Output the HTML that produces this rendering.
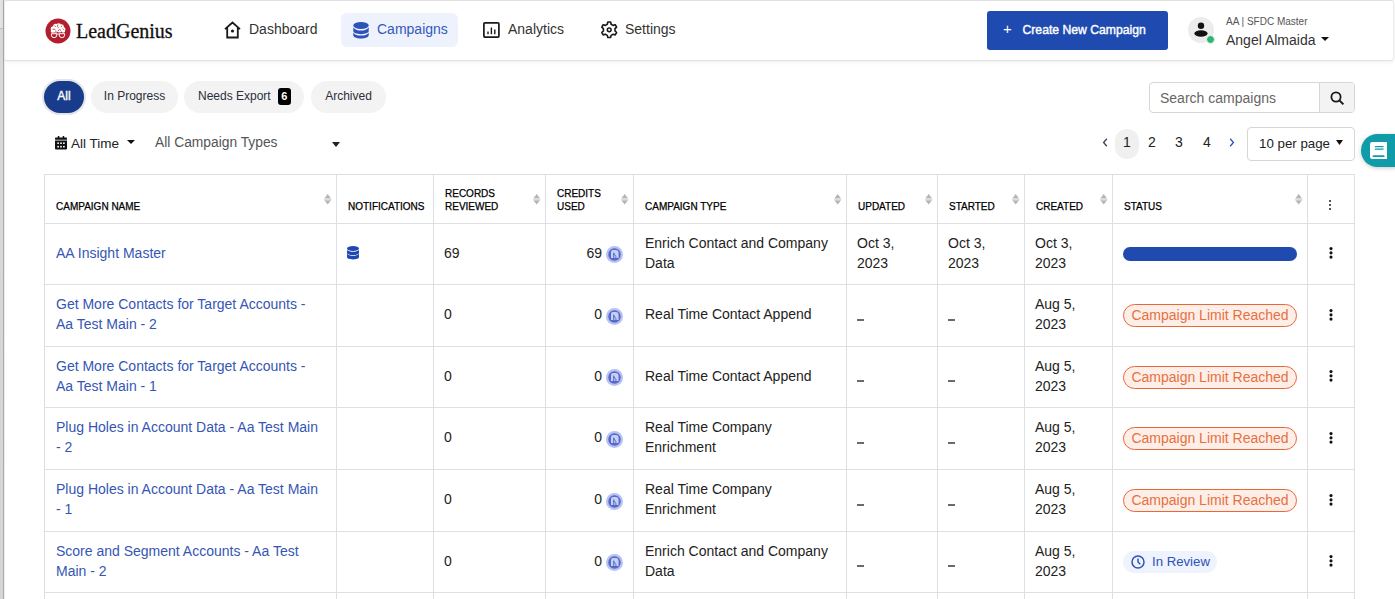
<!DOCTYPE html>
<html><head><meta charset="utf-8">
<style>
*{box-sizing:border-box;margin:0;padding:0}
html,body{width:1395px;height:599px;overflow:hidden;background:#fff;font-family:"Liberation Sans",sans-serif;color:#212529}
.a{position:absolute}
#strip{left:0;top:0;width:5px;height:599px;background:linear-gradient(to bottom,#e3e3e3 0,#e3e3e3 28px,#d9d9d9 29px,#d5d5d5 599px);border-right:1px solid #ededed;box-shadow:inset -1px 0 0 #ababab}
#strip2{left:0;top:28px;width:3px;height:1px;background:#bcc0c4}
#hdr{left:4px;top:0;width:1390px;height:61px;background:#fff;border:1px solid #ebebeb;border-top-color:#dfe0e2;border-bottom-color:#e2e2e2;border-radius:3px;box-shadow:0 1px 4px rgba(0,0,0,.07)}
.nav{font-size:14px;color:#333;white-space:nowrap}
.pill{height:32px;border-radius:16px;background:#f3f3f3;font-size:12px;color:#2b2f3a;padding-bottom:2px;display:flex;align-items:center;justify-content:center;white-space:nowrap}
.hl{height:1px;background:#dedfe2}
.vl{width:1px;background:#dedfe2}
.th{font-size:10px;font-weight:normal;-webkit-text-stroke:.25px #000;color:#000;line-height:13px}
.cell{display:flex;align-items:center;font-size:14px;line-height:20px;color:#222}
.lnk{color:#3556b4}
.badge{height:23px;border:1px solid #e8683a;background:#fdeee8;color:#e8703f;border-radius:12px;font-size:14px;display:flex;align-items:center;justify-content:center;white-space:nowrap}
.sort{width:8px;height:12px}
.keb{width:4px}
.keb i{display:block;width:3px;height:3px;border-radius:50%;background:#111;margin-bottom:1.5px}
</style></head><body>
<div class="a" id="strip"></div>
<div class="a" id="strip2"></div>
<div class="a" id="hdr"></div>

<!-- logo -->
<svg class="a" style="left:45px;top:18px" width="26" height="26" viewBox="0 0 26 26">
  <circle cx="13" cy="13" r="12.5" fill="#b11f2e"/>
  <g fill="#fff">
    <circle cx="8.2" cy="10.8" r="2.5"/><circle cx="10.6" cy="8.3" r="2.5"/><circle cx="13.6" cy="7.6" r="2.4"/><circle cx="16.4" cy="8.6" r="2.4"/>
    <circle cx="18" cy="11.3" r="2.4"/><circle cx="14.5" cy="11.6" r="2.8"/><circle cx="10.5" cy="12" r="2.6"/><circle cx="7.6" cy="12.9" r="1.9"/><circle cx="18.4" cy="13" r="1.8"/>
  </g>
  <path d="M9.5 7.5l1.3 1.6M13 6.5l-.6 2.2 1.4 1.2M16.2 7.6l.2 1.6M7.5 11.2h2.2l1 1.2M12.8 12.8l1.8-1.2 1.4.8M17.8 10.6l.8 1.2M10.5 14l.8-1" stroke="#b11f2e" stroke-width=".75" fill="none"/>
  <path d="M6.4 15.7H11.8V17.1Q11.8 19.6 9.1 19.6Q6.4 19.6 6.4 17.1zM14.2 15.7H19.6V17.1Q19.6 19.6 16.9 19.6Q14.2 19.6 14.2 17.1z" fill="none" stroke="#fff" stroke-width="1"/>
  <path d="M11.8 16h2.4" stroke="#fff" stroke-width=".8"/>
</svg>
<div class="a" style="left:76px;top:18px;font-family:'Liberation Serif',serif;font-size:20px;color:#111;line-height:26px;-webkit-text-stroke:.3px #111">LeadGenius</div>

<!-- nav -->
<svg class="a" style="left:223px;top:21px" width="19" height="18" viewBox="0 0 19 18">
  <path d="M2 8.2L9.5 1.5 17 8.2M4.2 6.5V16.5h10.6V6.5" fill="none" stroke="#1a1a1a" stroke-width="1.8" stroke-linejoin="miter"/>
  <circle cx="9.5" cy="10" r="1.6" fill="#1a1a1a"/>
</svg>
<div class="a nav" style="left:249px;top:21px;line-height:16px">Dashboard</div>

<div class="a" style="left:341px;top:13px;width:117px;height:34px;border-radius:6px;background:#edf2fc"></div>
<svg class="a" style="left:352.5px;top:21.5px" width="16" height="17" viewBox="0 0 16 17">
  <ellipse cx="8" cy="3.5" rx="7.7" ry="3.4" fill="#2d52b8"/>
  <path d="M0.3 5.2C1.5 7.6 4.5 8.6 8 8.6S14.5 7.6 15.7 5.2V9.1C15.7 10.9 12.3 12.2 8 12.2S0.3 10.9 0.3 9.1z" fill="#2d52b8"/>
  <path d="M0.3 10.4C1.5 12.6 4.5 13.6 8 13.6S14.5 12.6 15.7 10.4V13.3C15.7 15.2 12.3 16.6 8 16.6S0.3 15.2 0.3 13.3z" fill="#2d52b8"/>
</svg>
<div class="a nav" style="left:377px;top:21px;line-height:16px;color:#3458bd">Campaigns</div>

<svg class="a" style="left:483px;top:22px" width="17" height="16" viewBox="0 0 17 16">
  <rect x="0.9" y="0.9" width="15" height="14.2" rx="1" fill="none" stroke="#1a1a1a" stroke-width="1.7"/>
  <path d="M5 12.2V9.5M8.4 12.2V5.5M11.8 12.2V7.5" stroke="#1a1a1a" stroke-width="1.4"/>
</svg>
<div class="a nav" style="left:508px;top:21px;line-height:16px">Analytics</div>

<svg class="a" style="left:597px;top:18px" width="24" height="24" viewBox="0 0 24 24">
  <path d="M9.66 5.19 L10.33 2.55 L13.67 2.55 L14.34 5.19 L16.72 6.57 L19.35 5.83 L21.02 8.72 L19.07 10.63 L19.07 13.37 L21.02 15.28 L19.35 18.17 L16.72 17.43 L14.34 18.81 L13.67 21.45 L10.33 21.45 L9.66 18.81 L7.28 17.43 L4.65 18.17 L2.98 15.28 L4.93 13.37 L4.93 10.63 L2.98 8.72 L4.65 5.83 L7.28 6.57z" transform="translate(12.2 11.8) scale(.82) translate(-12 -12)" fill="none" stroke="#1a1a1a" stroke-width="2" stroke-linejoin="round"/>
  <circle cx="12.2" cy="11.8" r="1.9" fill="none" stroke="#1a1a1a" stroke-width="1.5"/>
</svg>
<div class="a nav" style="left:625px;top:21px;line-height:16px">Settings</div>

<!-- create button -->
<div class="a" style="left:987px;top:11px;width:181px;height:39px;background:#1f4bb0;border-radius:3px"></div>
<div class="a" style="left:1003px;top:21px;font-size:15px;color:#fff;line-height:16px">+</div>
<div class="a" style="left:1022.5px;top:22px;font-size:12.2px;font-weight:normal;-webkit-text-stroke:.4px #fff;color:#fff;line-height:16px">Create New Campaign</div>

<!-- user -->
<div class="a" style="left:1188px;top:17px;width:26px;height:26px;border-radius:50%;background:#ececec"></div>
<svg class="a" style="left:1193px;top:21px" width="16" height="16" viewBox="0 0 16 16">
  <circle cx="8" cy="4.8" r="3.2" fill="#111"/>
  <ellipse cx="8" cy="12.5" rx="6.6" ry="3.3" fill="#111"/>
</svg>
<div class="a" style="left:1205.5px;top:34.5px;width:9px;height:9px;border-radius:50%;background:#2bb673;border:1px solid #f4f4f4"></div>
<div class="a" style="left:1226px;top:15.5px;font-size:10px;color:#555;line-height:12px">AA | SFDC Master</div>
<div class="a" style="left:1226px;top:31.5px;font-size:14px;color:#333;line-height:16px">Angel Almaida</div>
<svg class="a" style="left:1321px;top:37px" width="8" height="4" viewBox="0 0 8 4"><path d="M0 0h8L4 4z" fill="#111"/></svg>

<!-- filter pills -->
<div class="a pill" style="left:44px;top:81px;width:40px;background:#183c8b;color:#fff;-webkit-text-stroke:.35px #fff;box-shadow:0 0 0 2px #e4e4e4">All</div>
<div class="a pill" style="left:91px;top:81px;width:87px">In Progress</div>
<div class="a pill" style="left:184px;top:81px;width:120px;justify-content:flex-start;padding-left:14px">Needs Export<span style="display:inline-block;margin-left:7px;width:13px;height:17px;background:#000;color:#fff;border-radius:3px;font-weight:bold;font-size:11px;text-align:center;line-height:17px;position:relative;top:0.5px">6</span></div>
<div class="a pill" style="left:311px;top:81px;width:75px">Archived</div>

<!-- search -->
<div class="a" style="left:1149px;top:82px;width:206px;height:31px;border:1px solid #d6d6d6;border-radius:4px"></div>
<div class="a" style="left:1319px;top:83px;width:35px;height:29px;background:#f3f3f3;border-left:1px solid #d6d6d6;border-radius:0 3px 3px 0"></div>
<div class="a" style="left:1160px;top:90px;font-size:14px;color:#666;line-height:16px">Search campaigns</div>
<svg class="a" style="left:1329.5px;top:90.5px" width="15" height="15" viewBox="0 0 15 15">
  <circle cx="6" cy="6" r="4.6" fill="none" stroke="#1a1a1a" stroke-width="1.8"/>
  <path d="M9.4 9.4l4 4" stroke="#1a1a1a" stroke-width="2"/>
</svg>

<!-- date/type filters -->
<svg class="a" style="left:55px;top:136px" width="12" height="14" viewBox="0 0 12 14">
  <rect x="2.8" y="0" width="1.5" height="2.6" fill="#111"/><rect x="7.7" y="0" width="1.5" height="2.6" fill="#111"/>
  <rect x="0" y="1.6" width="12" height="2.2" rx=".9" fill="#111"/>
  <path d="M0 4.4H12V12.4Q12 13.4 11 13.4H1Q0 13.4 0 12.4z" fill="#111"/>
  <g fill="#fff"><rect x="2.3" y="6.4" width="1.6" height="1.6"/><rect x="5.2" y="6.4" width="1.6" height="1.6"/><rect x="8.1" y="6.4" width="1.6" height="1.6"/><rect x="2.3" y="9.9" width="1.6" height="1.6"/><rect x="5.2" y="9.9" width="1.6" height="1.6"/><rect x="8.1" y="9.9" width="1.6" height="1.6"/></g>
</svg>
<div class="a" style="left:71px;top:136px;font-size:13.5px;color:#222;line-height:16px">All Time</div>
<svg class="a" style="left:127px;top:140px" width="8" height="4" viewBox="0 0 8 4"><path d="M0 0h8L4 4z" fill="#111"/></svg>
<div class="a" style="left:155px;top:135px;font-size:13.8px;color:#555;line-height:16px">All Campaign Types</div>
<svg class="a" style="left:332px;top:142px" width="8" height="5" viewBox="0 0 8 5"><path d="M0 0h8L4 5z" fill="#222"/></svg>

<!-- pagination -->
<svg class="a" style="left:1101.5px;top:138px" width="6" height="9" viewBox="0 0 6 9"><path d="M4.8 .8L1.6 4.5L4.8 8.2" fill="none" stroke="#3b3f5a" stroke-width="1.3"/></svg>
<div class="a" style="left:1115px;top:129px;width:24px;height:30px;border-radius:12px;background:#f0f0f0"></div>
<div class="a" style="left:1123px;top:135px;font-size:14px;color:#222;line-height:14px">1</div>
<div class="a" style="left:1148px;top:135px;font-size:14px;color:#222;line-height:14px">2</div>
<div class="a" style="left:1175px;top:135px;font-size:14px;color:#222;line-height:14px">3</div>
<div class="a" style="left:1203px;top:135px;font-size:14px;color:#222;line-height:14px">4</div>
<svg class="a" style="left:1229px;top:138px" width="6" height="9" viewBox="0 0 6 9"><path d="M1.2 .8L4.4 4.5L1.2 8.2" fill="none" stroke="#2d4fc0" stroke-width="1.3"/></svg>
<div class="a" style="left:1247px;top:127px;width:108px;height:34px;border:1px solid #d6d6d6;border-radius:4px"></div>
<div class="a" style="left:1259px;top:135.5px;font-size:13.3px;color:#222;line-height:16px">10 per page</div>
<svg class="a" style="left:1336px;top:140px" width="7" height="5" viewBox="0 0 7 5"><path d="M0 0h7L3.5 5z" fill="#111"/></svg>

<!-- floating -->
<div class="a" style="left:1361px;top:133.5px;width:50px;height:33.5px;border-radius:17px;background:#0f9ba7;box-shadow:0 1px 4px rgba(0,0,0,.22)"></div>
<svg class="a" style="left:1370px;top:141.5px" width="17" height="17" viewBox="0 0 17 17">
  <path d="M2.2 0H17V17H2.2Q0 17 0 14.8V2.2Q0 0 2.2 0z" fill="#fff"/>
  <path d="M4.8 4.6H13.6M4.8 7.1H13.6" stroke="#0f9ba7" stroke-width="1.1"/>
  <rect x="2.6" y="13.2" width="12" height="1.9" rx=".95" fill="#0f9ba7"/>
</svg>

<div class="a vl" style="left:44px;top:174px;height:425px"></div>
<div class="a vl" style="left:336px;top:174px;height:425px"></div>
<div class="a vl" style="left:433px;top:174px;height:425px"></div>
<div class="a vl" style="left:545px;top:174px;height:425px"></div>
<div class="a vl" style="left:633px;top:174px;height:425px"></div>
<div class="a vl" style="left:846px;top:174px;height:425px"></div>
<div class="a vl" style="left:937px;top:174px;height:425px"></div>
<div class="a vl" style="left:1024px;top:174px;height:425px"></div>
<div class="a vl" style="left:1112px;top:174px;height:425px"></div>
<div class="a vl" style="left:1307px;top:174px;height:425px"></div>
<div class="a vl" style="left:1354px;top:174px;height:425px"></div>
<div class="a hl" style="left:44px;top:174px;width:1311px"></div>
<div class="a hl" style="left:44px;top:223px;width:1311px"></div>
<div class="a hl" style="left:44px;top:284px;width:1311px"></div>
<div class="a hl" style="left:44px;top:346px;width:1311px"></div>
<div class="a hl" style="left:44px;top:407px;width:1311px"></div>
<div class="a hl" style="left:44px;top:469px;width:1311px"></div>
<div class="a hl" style="left:44px;top:531px;width:1311px"></div>
<div class="a hl" style="left:44px;top:592px;width:1311px"></div>
<div class="a th" style="left:56px;top:175px;width:280px;height:48px;display:flex;align-items:flex-end;padding-bottom:10px">CAMPAIGN NAME</div>
<div class="a" style="left:323.5px;top:193.5px;width:8px;height:11px"><svg width="8" height="11" viewBox="0 0 8 11" style="display:block"><path d="M3.7 0L7.1 4.6H0.3z M0.3 6.2H7.1L3.7 10.6z" fill="#b5b5b5"/><path d="M0.3 4.6H7.1L7.5 5.4L7.1 6.2H0.3L-.1 5.4z" fill="#dcdcdc"/></svg></div>
<div class="a th" style="left:348px;top:175px;width:85px;height:48px;display:flex;align-items:flex-end;padding-bottom:10px">NOTIFICATIONS</div>
<div class="a th" style="left:445px;top:175px;width:100px;height:48px;display:flex;align-items:flex-end;padding-bottom:10px">RECORDS<br>REVIEWED</div>
<div class="a" style="left:532.5px;top:193.5px;width:8px;height:11px"><svg width="8" height="11" viewBox="0 0 8 11" style="display:block"><path d="M3.7 0L7.1 4.6H0.3z M0.3 6.2H7.1L3.7 10.6z" fill="#b5b5b5"/><path d="M0.3 4.6H7.1L7.5 5.4L7.1 6.2H0.3L-.1 5.4z" fill="#dcdcdc"/></svg></div>
<div class="a th" style="left:557px;top:175px;width:76px;height:48px;display:flex;align-items:flex-end;padding-bottom:10px">CREDITS<br>USED</div>
<div class="a" style="left:620.5px;top:193.5px;width:8px;height:11px"><svg width="8" height="11" viewBox="0 0 8 11" style="display:block"><path d="M3.7 0L7.1 4.6H0.3z M0.3 6.2H7.1L3.7 10.6z" fill="#b5b5b5"/><path d="M0.3 4.6H7.1L7.5 5.4L7.1 6.2H0.3L-.1 5.4z" fill="#dcdcdc"/></svg></div>
<div class="a th" style="left:645px;top:175px;width:201px;height:48px;display:flex;align-items:flex-end;padding-bottom:10px">CAMPAIGN TYPE</div>
<div class="a" style="left:833.5px;top:193.5px;width:8px;height:11px"><svg width="8" height="11" viewBox="0 0 8 11" style="display:block"><path d="M3.7 0L7.1 4.6H0.3z M0.3 6.2H7.1L3.7 10.6z" fill="#b5b5b5"/><path d="M0.3 4.6H7.1L7.5 5.4L7.1 6.2H0.3L-.1 5.4z" fill="#dcdcdc"/></svg></div>
<div class="a th" style="left:858px;top:175px;width:79px;height:48px;display:flex;align-items:flex-end;padding-bottom:10px">UPDATED</div>
<div class="a" style="left:924.5px;top:193.5px;width:8px;height:11px"><svg width="8" height="11" viewBox="0 0 8 11" style="display:block"><path d="M3.7 0L7.1 4.6H0.3z M0.3 6.2H7.1L3.7 10.6z" fill="#b5b5b5"/><path d="M0.3 4.6H7.1L7.5 5.4L7.1 6.2H0.3L-.1 5.4z" fill="#dcdcdc"/></svg></div>
<div class="a th" style="left:949px;top:175px;width:75px;height:48px;display:flex;align-items:flex-end;padding-bottom:10px">STARTED</div>
<div class="a" style="left:1011.5px;top:193.5px;width:8px;height:11px"><svg width="8" height="11" viewBox="0 0 8 11" style="display:block"><path d="M3.7 0L7.1 4.6H0.3z M0.3 6.2H7.1L3.7 10.6z" fill="#b5b5b5"/><path d="M0.3 4.6H7.1L7.5 5.4L7.1 6.2H0.3L-.1 5.4z" fill="#dcdcdc"/></svg></div>
<div class="a th" style="left:1036px;top:175px;width:76px;height:48px;display:flex;align-items:flex-end;padding-bottom:10px">CREATED</div>
<div class="a" style="left:1099.5px;top:193.5px;width:8px;height:11px"><svg width="8" height="11" viewBox="0 0 8 11" style="display:block"><path d="M3.7 0L7.1 4.6H0.3z M0.3 6.2H7.1L3.7 10.6z" fill="#b5b5b5"/><path d="M0.3 4.6H7.1L7.5 5.4L7.1 6.2H0.3L-.1 5.4z" fill="#dcdcdc"/></svg></div>
<div class="a th" style="left:1124px;top:175px;width:183px;height:48px;display:flex;align-items:flex-end;padding-bottom:10px">STATUS</div>
<div class="a" style="left:1294.5px;top:193.5px;width:8px;height:11px"><svg width="8" height="11" viewBox="0 0 8 11" style="display:block"><path d="M3.7 0L7.1 4.6H0.3z M0.3 6.2H7.1L3.7 10.6z" fill="#b5b5b5"/><path d="M0.3 4.6H7.1L7.5 5.4L7.1 6.2H0.3L-.1 5.4z" fill="#dcdcdc"/></svg></div>
<div class="a" style="left:1329px;top:200px;width:2px;height:10px"><i style="position:absolute;left:0;top:0;width:2px;height:2px;background:#555"></i><i style="position:absolute;left:0;top:4px;width:2px;height:2px;background:#555"></i><i style="position:absolute;left:0;top:8px;width:2px;height:2px;background:#555"></i></div>
<div class="a cell" style="left:45px;top:224px;width:291px;height:60px;padding-left:11px;padding-right:0px;padding-bottom:2px;"><span class="lnk">AA Insight Master</span></div>
<div class="a cell" style="left:337px;top:224px;width:96px;height:60px;padding-left:10px;padding-right:0px;padding-bottom:2px;"><svg width="12" height="14" viewBox="0 0 12 14" style="display:block;position:relative;top:-0.5px"><ellipse cx="6" cy="2.5" rx="6" ry="2.4" fill="#1f48b2"/><path d="M0 3.9C1.2 5.1 3.5 5.7 6 5.7S10.8 5.1 12 3.9V7C12 8.2 9.3 9.1 6 9.1S0 8.200 0 7z" fill="#1f48b2"/><path d="M0 8C1.2 9.2 3.5 9.8 6 9.8S10.8 9.2 12 8V11.3C12 12.5 9.3 13.4 6 13.4S0 12.5 0 11.3z" fill="#1f48b2"/></svg></div>
<div class="a cell" style="left:434px;top:224px;width:111px;height:60px;padding-left:10px;padding-right:0px;padding-bottom:2px;">69</div>
<div class="a cell" style="left:546px;top:224px;width:87px;height:60px;padding-left:0px;padding-right:10px;padding-bottom:2px;justify-content:flex-end">69<svg width="17" height="17" viewBox="0 0 17 17" style="margin-left:4px;position:relative;top:1px"><circle cx="8.5" cy="8.5" r="8.5" fill="#b6c2f4"/><circle cx="8.5" cy="8.5" r="6.2" fill="#5769c6"/><path d="M5 12.1V6.2Q5 4.1 7 4.1H9.8Q12.6 4.1 12.6 7V12.1z" fill="#c6cff7"/><path d="M7.7 6.6V12.2M7.7 7.2L9.9 10.6V12.2" stroke="#5769c6" stroke-width="1" fill="none"/></svg></div>
<div class="a cell" style="left:634px;top:224px;width:212px;height:60px;padding-left:11px;padding-right:0px;padding-bottom:2px;">Enrich Contact and Company<br>Data</div>
<div class="a cell" style="left:847px;top:224px;width:90px;height:60px;padding-left:10px;padding-right:0px;padding-bottom:2px;">Oct 3,<br>2023</div>
<div class="a cell" style="left:938px;top:224px;width:86px;height:60px;padding-left:10px;padding-right:0px;padding-bottom:2px;">Oct 3,<br>2023</div>
<div class="a cell" style="left:1025px;top:224px;width:87px;height:60px;padding-left:10px;padding-right:0px;padding-bottom:2px;">Oct 3,<br>2023</div>
<div class="a cell" style="left:1113px;top:224px;width:194px;height:60px;padding-left:10px;padding-right:0px;padding-bottom:2px;"><div style="width:174px;height:14px;border-radius:7px;background:#1f4bb0;position:relative;top:1px"></div></div>
<div class="a cell" style="left:1308px;top:224px;width:46px;height:60px;padding-left:0px;padding-right:0px;padding-bottom:2px;justify-content:center"><svg width="4" height="12" viewBox="0 0 4 12" style="display:block;position:relative;top:0px"><circle cx="2" cy="1.6" r="1.55" fill="#111"/><circle cx="2" cy="5.85" r="1.55" fill="#111"/><circle cx="2" cy="10.1" r="1.55" fill="#111"/></svg></div>
<div class="a cell" style="left:45px;top:285px;width:291px;height:61px;padding-left:11px;padding-right:0px;padding-bottom:3px;"><span class="lnk">Get More Contacts for Target Accounts -<br>Aa Test Main - 2</span></div>
<div class="a cell" style="left:434px;top:285px;width:111px;height:61px;padding-left:10px;padding-right:0px;padding-bottom:3px;">0</div>
<div class="a cell" style="left:546px;top:285px;width:87px;height:61px;padding-left:0px;padding-right:10px;padding-bottom:3px;justify-content:flex-end">0<svg width="17" height="17" viewBox="0 0 17 17" style="margin-left:4px;position:relative;top:2px"><circle cx="8.5" cy="8.5" r="8.5" fill="#b6c2f4"/><circle cx="8.5" cy="8.5" r="6.2" fill="#5769c6"/><path d="M5 12.1V6.2Q5 4.1 7 4.1H9.8Q12.6 4.1 12.6 7V12.1z" fill="#c6cff7"/><path d="M7.7 6.6V12.2M7.7 7.2L9.9 10.6V12.2" stroke="#5769c6" stroke-width="1" fill="none"/></svg></div>
<div class="a cell" style="left:634px;top:285px;width:212px;height:61px;padding-left:11px;padding-right:0px;padding-bottom:3px;">Real Time Contact Append</div>
<div class="a cell" style="left:847px;top:285px;width:90px;height:61px;padding-left:10px;padding-right:0px;padding-bottom:3px;"><div style="width:7px;height:2px;background:#6a6a6a;margin-top:11px"></div></div>
<div class="a cell" style="left:938px;top:285px;width:86px;height:61px;padding-left:10px;padding-right:0px;padding-bottom:3px;"><div style="width:7px;height:2px;background:#6a6a6a;margin-top:11px"></div></div>
<div class="a cell" style="left:1025px;top:285px;width:87px;height:61px;padding-left:10px;padding-right:0px;padding-bottom:3px;">Aug 5,<br>2023</div>
<div class="a cell" style="left:1113px;top:285px;width:194px;height:61px;padding-left:10px;padding-right:0px;padding-bottom:3px;"><div class="badge" style="width:174px;height:23px;position:relative;top:1px">Campaign Limit Reached</div></div>
<div class="a cell" style="left:1308px;top:285px;width:46px;height:61px;padding-left:0px;padding-right:0px;padding-bottom:3px;justify-content:center"><svg width="4" height="12" viewBox="0 0 4 12" style="display:block;position:relative;top:1px"><circle cx="2" cy="1.6" r="1.55" fill="#111"/><circle cx="2" cy="5.85" r="1.55" fill="#111"/><circle cx="2" cy="10.1" r="1.55" fill="#111"/></svg></div>
<div class="a cell" style="left:45px;top:347px;width:291px;height:60px;padding-left:11px;padding-right:0px;padding-bottom:2px;"><span class="lnk">Get More Contacts for Target Accounts -<br>Aa Test Main - 1</span></div>
<div class="a cell" style="left:434px;top:347px;width:111px;height:60px;padding-left:10px;padding-right:0px;padding-bottom:2px;">0</div>
<div class="a cell" style="left:546px;top:347px;width:87px;height:60px;padding-left:0px;padding-right:10px;padding-bottom:2px;justify-content:flex-end">0<svg width="17" height="17" viewBox="0 0 17 17" style="margin-left:4px;position:relative;top:1px"><circle cx="8.5" cy="8.5" r="8.5" fill="#b6c2f4"/><circle cx="8.5" cy="8.5" r="6.2" fill="#5769c6"/><path d="M5 12.1V6.2Q5 4.1 7 4.1H9.8Q12.6 4.1 12.6 7V12.1z" fill="#c6cff7"/><path d="M7.7 6.6V12.2M7.7 7.2L9.9 10.6V12.2" stroke="#5769c6" stroke-width="1" fill="none"/></svg></div>
<div class="a cell" style="left:634px;top:347px;width:212px;height:60px;padding-left:11px;padding-right:0px;padding-bottom:2px;">Real Time Contact Append</div>
<div class="a cell" style="left:847px;top:347px;width:90px;height:60px;padding-left:10px;padding-right:0px;padding-bottom:2px;"><div style="width:7px;height:2px;background:#6a6a6a;margin-top:9px"></div></div>
<div class="a cell" style="left:938px;top:347px;width:86px;height:60px;padding-left:10px;padding-right:0px;padding-bottom:2px;"><div style="width:7px;height:2px;background:#6a6a6a;margin-top:9px"></div></div>
<div class="a cell" style="left:1025px;top:347px;width:87px;height:60px;padding-left:10px;padding-right:0px;padding-bottom:2px;">Aug 5,<br>2023</div>
<div class="a cell" style="left:1113px;top:347px;width:194px;height:60px;padding-left:10px;padding-right:0px;padding-bottom:2px;"><div class="badge" style="width:174px;height:23px;position:relative;top:1px">Campaign Limit Reached</div></div>
<div class="a cell" style="left:1308px;top:347px;width:46px;height:60px;padding-left:0px;padding-right:0px;padding-bottom:2px;justify-content:center"><svg width="4" height="12" viewBox="0 0 4 12" style="display:block;position:relative;top:0px"><circle cx="2" cy="1.6" r="1.55" fill="#111"/><circle cx="2" cy="5.85" r="1.55" fill="#111"/><circle cx="2" cy="10.1" r="1.55" fill="#111"/></svg></div>
<div class="a cell" style="left:45px;top:408px;width:291px;height:61px;padding-left:11px;padding-right:0px;padding-bottom:3px;"><span class="lnk">Plug Holes in Account Data - Aa Test Main<br>- 2</span></div>
<div class="a cell" style="left:434px;top:408px;width:111px;height:61px;padding-left:10px;padding-right:0px;padding-bottom:3px;">0</div>
<div class="a cell" style="left:546px;top:408px;width:87px;height:61px;padding-left:0px;padding-right:10px;padding-bottom:3px;justify-content:flex-end">0<svg width="17" height="17" viewBox="0 0 17 17" style="margin-left:4px;position:relative;top:2px"><circle cx="8.5" cy="8.5" r="8.5" fill="#b6c2f4"/><circle cx="8.5" cy="8.5" r="6.2" fill="#5769c6"/><path d="M5 12.1V6.2Q5 4.1 7 4.1H9.8Q12.6 4.1 12.6 7V12.1z" fill="#c6cff7"/><path d="M7.7 6.6V12.2M7.7 7.2L9.9 10.6V12.2" stroke="#5769c6" stroke-width="1" fill="none"/></svg></div>
<div class="a cell" style="left:634px;top:408px;width:212px;height:61px;padding-left:11px;padding-right:0px;padding-bottom:3px;">Real Time Company<br>Enrichment</div>
<div class="a cell" style="left:847px;top:408px;width:90px;height:61px;padding-left:10px;padding-right:0px;padding-bottom:3px;"><div style="width:7px;height:2px;background:#6a6a6a;margin-top:11px"></div></div>
<div class="a cell" style="left:938px;top:408px;width:86px;height:61px;padding-left:10px;padding-right:0px;padding-bottom:3px;"><div style="width:7px;height:2px;background:#6a6a6a;margin-top:11px"></div></div>
<div class="a cell" style="left:1025px;top:408px;width:87px;height:61px;padding-left:10px;padding-right:0px;padding-bottom:3px;">Aug 5,<br>2023</div>
<div class="a cell" style="left:1113px;top:408px;width:194px;height:61px;padding-left:10px;padding-right:0px;padding-bottom:3px;"><div class="badge" style="width:174px;height:23px;position:relative;top:1px">Campaign Limit Reached</div></div>
<div class="a cell" style="left:1308px;top:408px;width:46px;height:61px;padding-left:0px;padding-right:0px;padding-bottom:3px;justify-content:center"><svg width="4" height="12" viewBox="0 0 4 12" style="display:block;position:relative;top:1px"><circle cx="2" cy="1.6" r="1.55" fill="#111"/><circle cx="2" cy="5.85" r="1.55" fill="#111"/><circle cx="2" cy="10.1" r="1.55" fill="#111"/></svg></div>
<div class="a cell" style="left:45px;top:470px;width:291px;height:61px;padding-left:11px;padding-right:0px;padding-bottom:3px;"><span class="lnk">Plug Holes in Account Data - Aa Test Main<br>- 1</span></div>
<div class="a cell" style="left:434px;top:470px;width:111px;height:61px;padding-left:10px;padding-right:0px;padding-bottom:3px;">0</div>
<div class="a cell" style="left:546px;top:470px;width:87px;height:61px;padding-left:0px;padding-right:10px;padding-bottom:3px;justify-content:flex-end">0<svg width="17" height="17" viewBox="0 0 17 17" style="margin-left:4px;position:relative;top:2px"><circle cx="8.5" cy="8.5" r="8.5" fill="#b6c2f4"/><circle cx="8.5" cy="8.5" r="6.2" fill="#5769c6"/><path d="M5 12.1V6.2Q5 4.1 7 4.1H9.8Q12.6 4.1 12.6 7V12.1z" fill="#c6cff7"/><path d="M7.7 6.6V12.2M7.7 7.2L9.9 10.6V12.2" stroke="#5769c6" stroke-width="1" fill="none"/></svg></div>
<div class="a cell" style="left:634px;top:470px;width:212px;height:61px;padding-left:11px;padding-right:0px;padding-bottom:3px;">Real Time Company<br>Enrichment</div>
<div class="a cell" style="left:847px;top:470px;width:90px;height:61px;padding-left:10px;padding-right:0px;padding-bottom:3px;"><div style="width:7px;height:2px;background:#6a6a6a;margin-top:11px"></div></div>
<div class="a cell" style="left:938px;top:470px;width:86px;height:61px;padding-left:10px;padding-right:0px;padding-bottom:3px;"><div style="width:7px;height:2px;background:#6a6a6a;margin-top:11px"></div></div>
<div class="a cell" style="left:1025px;top:470px;width:87px;height:61px;padding-left:10px;padding-right:0px;padding-bottom:3px;">Aug 5,<br>2023</div>
<div class="a cell" style="left:1113px;top:470px;width:194px;height:61px;padding-left:10px;padding-right:0px;padding-bottom:3px;"><div class="badge" style="width:174px;height:23px;position:relative;top:1px">Campaign Limit Reached</div></div>
<div class="a cell" style="left:1308px;top:470px;width:46px;height:61px;padding-left:0px;padding-right:0px;padding-bottom:3px;justify-content:center"><svg width="4" height="12" viewBox="0 0 4 12" style="display:block;position:relative;top:1px"><circle cx="2" cy="1.6" r="1.55" fill="#111"/><circle cx="2" cy="5.85" r="1.55" fill="#111"/><circle cx="2" cy="10.1" r="1.55" fill="#111"/></svg></div>
<div class="a cell" style="left:45px;top:532px;width:291px;height:60px;padding-left:11px;padding-right:0px;padding-bottom:2px;"><span class="lnk">Score and Segment Accounts - Aa Test<br>Main - 2</span></div>
<div class="a cell" style="left:434px;top:532px;width:111px;height:60px;padding-left:10px;padding-right:0px;padding-bottom:2px;">0</div>
<div class="a cell" style="left:546px;top:532px;width:87px;height:60px;padding-left:0px;padding-right:10px;padding-bottom:2px;justify-content:flex-end">0<svg width="17" height="17" viewBox="0 0 17 17" style="margin-left:4px;position:relative;top:1px"><circle cx="8.5" cy="8.5" r="8.5" fill="#b6c2f4"/><circle cx="8.5" cy="8.5" r="6.2" fill="#5769c6"/><path d="M5 12.1V6.2Q5 4.1 7 4.1H9.8Q12.6 4.1 12.6 7V12.1z" fill="#c6cff7"/><path d="M7.7 6.6V12.2M7.7 7.2L9.9 10.6V12.2" stroke="#5769c6" stroke-width="1" fill="none"/></svg></div>
<div class="a cell" style="left:634px;top:532px;width:212px;height:60px;padding-left:11px;padding-right:0px;padding-bottom:2px;">Enrich Contact and Company<br>Data</div>
<div class="a cell" style="left:847px;top:532px;width:90px;height:60px;padding-left:10px;padding-right:0px;padding-bottom:2px;"><div style="width:7px;height:2px;background:#6a6a6a;margin-top:9px"></div></div>
<div class="a cell" style="left:938px;top:532px;width:86px;height:60px;padding-left:10px;padding-right:0px;padding-bottom:2px;"><div style="width:7px;height:2px;background:#6a6a6a;margin-top:9px"></div></div>
<div class="a cell" style="left:1025px;top:532px;width:87px;height:60px;padding-left:10px;padding-right:0px;padding-bottom:2px;">Aug 5,<br>2023</div>
<div class="a cell" style="left:1113px;top:532px;width:194px;height:60px;padding-left:10px;padding-right:0px;padding-bottom:2px;"><div style="width:94px;height:22px;border-radius:11px;background:#eef3fd;color:#2d52b8;font-size:13.2px;display:flex;align-items:center;padding-left:8px;position:relative;top:1px"><svg width="14" height="14" viewBox="0 0 14 14" style="margin-right:7px"><circle cx="7" cy="7" r="6" fill="none" stroke="#2d52b8" stroke-width="1.5"/><path d="M7 3.5V7l2.3 2.2" fill="none" stroke="#2d52b8" stroke-width="1.5"/></svg>In Review</div></div>
<div class="a cell" style="left:1308px;top:532px;width:46px;height:60px;padding-left:0px;padding-right:0px;padding-bottom:2px;justify-content:center"><svg width="4" height="12" viewBox="0 0 4 12" style="display:block;position:relative;top:0px"><circle cx="2" cy="1.6" r="1.55" fill="#111"/><circle cx="2" cy="5.85" r="1.55" fill="#111"/><circle cx="2" cy="10.1" r="1.55" fill="#111"/></svg></div>
<div class="a cell" style="left:45px;top:593px;width:291px;height:61px;padding-left:11px;padding-right:0px;padding-bottom:3px;"><span class="lnk">Score and Segment Accounts - Aa Test<br>Main - 1</span></div>
<div class="a cell" style="left:434px;top:593px;width:111px;height:61px;padding-left:10px;padding-right:0px;padding-bottom:3px;">0</div>
<div class="a cell" style="left:546px;top:593px;width:87px;height:61px;padding-left:0px;padding-right:10px;padding-bottom:3px;justify-content:flex-end">0<svg width="17" height="17" viewBox="0 0 17 17" style="margin-left:4px;position:relative;top:2px"><circle cx="8.5" cy="8.5" r="8.5" fill="#b6c2f4"/><circle cx="8.5" cy="8.5" r="6.2" fill="#5769c6"/><path d="M5 12.1V6.2Q5 4.1 7 4.1H9.8Q12.6 4.1 12.6 7V12.1z" fill="#c6cff7"/><path d="M7.7 6.6V12.2M7.7 7.2L9.9 10.6V12.2" stroke="#5769c6" stroke-width="1" fill="none"/></svg></div>
<div class="a cell" style="left:634px;top:593px;width:212px;height:61px;padding-left:11px;padding-right:0px;padding-bottom:3px;">Enrich Contact and Company<br>Data</div>
<div class="a cell" style="left:847px;top:593px;width:90px;height:61px;padding-left:10px;padding-right:0px;padding-bottom:3px;"><div style="width:7px;height:2px;background:#6a6a6a;margin-top:11px"></div></div>
<div class="a cell" style="left:938px;top:593px;width:86px;height:61px;padding-left:10px;padding-right:0px;padding-bottom:3px;"><div style="width:7px;height:2px;background:#6a6a6a;margin-top:11px"></div></div>
<div class="a cell" style="left:1025px;top:593px;width:87px;height:61px;padding-left:10px;padding-right:0px;padding-bottom:3px;">Aug 5,<br>2023</div>
<div class="a cell" style="left:1113px;top:593px;width:194px;height:61px;padding-left:10px;padding-right:0px;padding-bottom:3px;"><div style="width:94px;height:22px;border-radius:11px;background:#eef3fd;color:#2d52b8;font-size:13.2px;display:flex;align-items:center;padding-left:8px;position:relative;top:1px"><svg width="14" height="14" viewBox="0 0 14 14" style="margin-right:7px"><circle cx="7" cy="7" r="6" fill="none" stroke="#2d52b8" stroke-width="1.5"/><path d="M7 3.5V7l2.3 2.2" fill="none" stroke="#2d52b8" stroke-width="1.5"/></svg>In Review</div></div>
<div class="a cell" style="left:1308px;top:593px;width:46px;height:61px;padding-left:0px;padding-right:0px;padding-bottom:3px;justify-content:center"><svg width="4" height="12" viewBox="0 0 4 12" style="display:block;position:relative;top:1px"><circle cx="2" cy="1.6" r="1.55" fill="#111"/><circle cx="2" cy="5.85" r="1.55" fill="#111"/><circle cx="2" cy="10.1" r="1.55" fill="#111"/></svg></div>
</body></html>
